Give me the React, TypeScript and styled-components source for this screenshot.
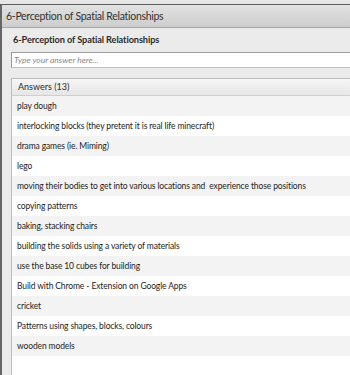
import styled, { createGlobalStyle } from 'styled-components';

const answers = [
  'play dough',
  'interlocking blocks (they pretent it is real life minecraft)',
  'drama games (ie. Miming)',
  'lego',
  'moving their bodies to get into various locations and  experience those positions',
  'copying patterns',
  'baking, stacking chairs',
  'building the solids using a variety of materials',
  'use the base 10 cubes for building',
  'Build with Chrome - Extension on Google Apps',
  'cricket',
  'Patterns using shapes, blocks, colours',
  'wooden models',
];

export default function App() {
  return (
    <>
      <GlobalStyle />
      <Page>
        <TopStrip />
        <Window>
          <TitleBar>6-Perception of Spatial Relationships</TitleBar>
          <Body>
            <Subtitle>6-Perception of Spatial Relationships</Subtitle>
            <AnswerInput placeholder="Type your answer here..." />
            <Panel>
              <PanelHeader>Answers ({answers.length})</PanelHeader>
              {answers.map((a, i) => (
                <Row key={i} $odd={i % 2 === 0}>
                  {a}
                </Row>
              ))}
            </Panel>
          </Body>
        </Window>
      </Page>
    </>
  );
}

const GlobalStyle = createGlobalStyle`
  body {
    margin: 0;
    font-family: Lato, "Open Sans", sans-serif;
    background: #e9e9e9;
  }
`;

const Page = styled.div`
  width: 350px;
  height: 375px;
  overflow: hidden;
  display: flex;
  flex-direction: column;
  background: #e9e9e9;
`;

const TopStrip = styled.div`
  height: 4px;
  flex-shrink: 0;
  background: #e6e6e6;
  border-bottom: 1px solid #5c5c5c;
`;

const Window = styled.div`
  flex: 1;
  display: flex;
  flex-direction: column;
  border-left: 2px solid #666;
  min-height: 0;
`;

const TitleBar = styled.div`
  height: 22px;
  flex-shrink: 0;
  line-height: 22px;
  padding-left: 4px;
  font-size: 10.5px;
  letter-spacing: -0.3px;
  color: #333;
  white-space: nowrap;
  background: linear-gradient(#e2e2e2, #cdcdcd);
  border-bottom: 1px solid #a9a9a9;
`;

const Body = styled.div`
  flex: 1;
  display: flex;
  flex-direction: column;
  padding-left: 9px;
  background: #ebebeb;
  min-height: 0;
`;

const Subtitle = styled.div`
  height: 24px;
  line-height: 24px;
  padding-left: 2px;
  font-size: 9.2px;
  letter-spacing: -0.1px;
  font-weight: 700;
  color: #2a2a2a;
  white-space: nowrap;
`;

const AnswerInput = styled.input`
  box-sizing: border-box;
  width: calc(100% + 20px);
  height: 16px;
  margin: 0;
  padding: 0 2px;
  border: 1px solid #9a9a9a;
  border-bottom-color: #c4c4c4;
  background: #fff;
  font-family: Lato, "Open Sans", sans-serif;
  font-size: 8.5px;
  outline: none;

  &::placeholder {
    color: #8a8a8a;
    font-style: italic;
  }
`;

const Panel = styled.div`
  margin-top: 10px;
  margin-right: -20px;
  flex: 1;
  background: #fff;
  border: 1px solid #bdbdbd;
  border-right: none;
  border-bottom: none;
`;

const PanelHeader = styled.div`
  height: 16px;
  line-height: 16px;
  padding-left: 6px;
  font-size: 9px;
  color: #2a2a2a;
  background: linear-gradient(#f6f6f6, #e6e6e6);
  border-bottom: 1px solid #cfcfcf;
`;

const Row = styled.div<{ $odd: boolean }>`
  height: 20px;
  line-height: 20px;
  padding-left: 5px;
  font-size: 8.5px;
  letter-spacing: -0.12px;
  color: #1c1c1c;
  white-space: pre;
  background: ${(p) => (p.$odd ? '#f3f3f3' : '#fff')};
`;
